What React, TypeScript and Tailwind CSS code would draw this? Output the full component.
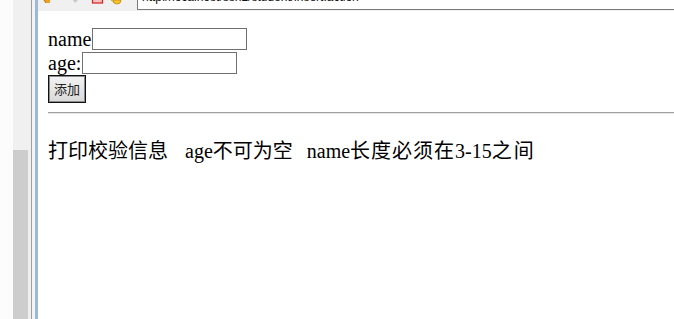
import React from 'react'

const serif = { fontFamily: '"Liberation Serif", "Noto Sans CJK SC", serif' }

function ToolbarIcons() {
  return (
    <svg width="99" height="11" viewBox="0 0 99 11" className="shrink-0">
      {/* back arrow */}
      <path d="M6 0 L8 3 L12 3 L12 0 Z" fill="#f0a21c" />
      <path d="M6 0 L8 3" stroke="#b86b00" strokeWidth="1" />
      {/* forward arrow, disabled */}
      <path d="M35 0 L37 3 L40 0 Z" fill="#c8c8c8" />
      {/* stop */}
      <rect x="54.5" y="-3" width="10" height="6" fill="#f6c1c1" stroke="#d81e1e" strokeWidth="1.2" />
      {/* refresh */}
      <path d="M75 0 Q75 4 79 4 Q83 4 83 0 Z" fill="#f5c431" stroke="#c48a00" strokeWidth="0.8" />
      <path d="M73 0 L76 2" stroke="#c48a00" strokeWidth="0.8" />
    </svg>
  )
}

export default function App() {
  return (
    <div className="flex h-[319px] w-[674px] overflow-hidden bg-white text-black" style={serif}>
      <div className="w-[13px] shrink-0 bg-[#fcfcfc]" />
      <div className="flex w-[15px] shrink-0 flex-col bg-[#f0f0f0]">
        <div className="h-[150px]" />
        <div className="flex-1 bg-[#cdcdcd]" />
      </div>
      <div className="w-[3px] shrink-0 bg-[#f0f0f0]" />
      <div className="w-px shrink-0 bg-[#a0a0a0]" />
      <div className="w-[3px] shrink-0 bg-[#f3f3f3]" />
      <div className="w-[3px] shrink-0 bg-[#9db8d8]" />

      <div className="flex min-w-0 flex-1 flex-col">
        <div className="flex h-[11px] shrink-0 items-start bg-[#f0f0f0]">
          <ToolbarIcons />
          <div className="h-[10px] flex-1 overflow-hidden border-b border-l border-[#7a7a7a] bg-white pl-[4px]">
            <div
              className="-mt-[9px] whitespace-nowrap text-[12px] leading-[12px] text-[#111]"
              style={{ fontFamily: '"Liberation Sans", sans-serif' }}
            >
              http://localhost/ssh2/student/insert.action
            </div>
          </div>
        </div>

        <div className="pl-[10px] pt-[16px] text-[20px] leading-[24px]">
          <div className="flex h-[24px] items-center">
            <span>name</span>
            <input className="ml-px h-[22px] w-[155px] border border-[#707070] bg-white outline-none" />
          </div>
          <div className="flex h-[24px] items-center">
            <span>age:</span>
            <input className="ml-px h-[22px] w-[155px] border border-[#707070] bg-white outline-none" />
          </div>
          <button
            className="flex h-[28px] w-[38px] items-center justify-center border border-[#111] bg-gradient-to-b from-[#f3f3f3] to-[#d9d9d9] text-[13px] leading-[16px] text-[#222] shadow-[inset_0_0_0_1px_#8a8a8a]"
            style={{ fontFamily: '"Noto Sans CJK SC", sans-serif' }}
          >
            添加
          </button>

          <div className="mt-[9px] h-px bg-[#a0a0a0]" />
          <div className="h-px bg-[#e6e6e6]" />

          <div className="mt-[25px] flex h-[24px] items-center whitespace-nowrap">
            <span>打印校验信息</span>
            <span className="ml-[17px]">age不可为空</span>
            <span className="ml-[14px]">
              name<span className="tracking-[1px]">长度必须在</span>3-15<span className="tracking-[2px]">之间</span>
            </span>
          </div>
        </div>
      </div>
    </div>
  )
}
